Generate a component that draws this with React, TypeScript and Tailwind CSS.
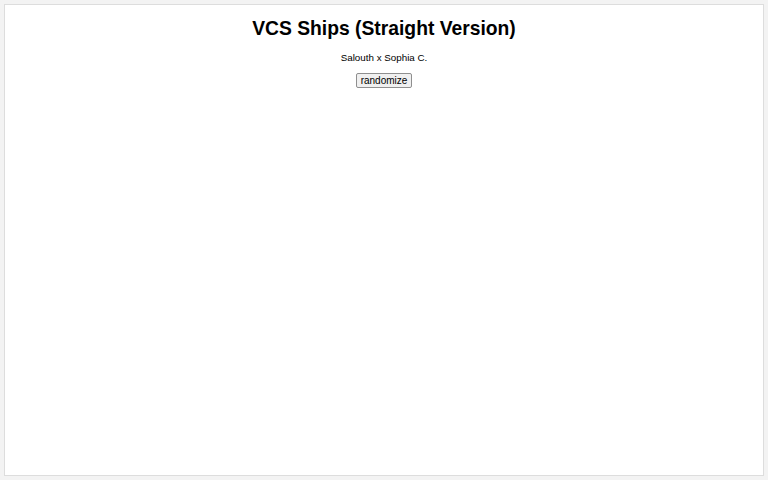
export default function App() {
  return (
    <div className="h-[480px] w-[768px] bg-[#f3f3f3] p-[4px]" style={{ fontFamily: '"Liberation Sans", Arial, sans-serif' }}>
      <div className="flex h-full flex-col items-center border border-[#dddddd] bg-white">
        <h1 className="mt-[10px] text-[19.3px] font-bold leading-[28px] text-black">VCS Ships (Straight Version)</h1>
        <p className="mt-[9px] text-[9.8px] leading-[12px] text-black">Salouth x Sophia C.</p>
        <button className="mt-[9px] rounded-[2px] border border-[#8f8f8f] bg-[#f0f0f0] px-[3.5px] text-[10px] leading-[13px] text-black">
          randomize
        </button>
      </div>
    </div>
  );
}
